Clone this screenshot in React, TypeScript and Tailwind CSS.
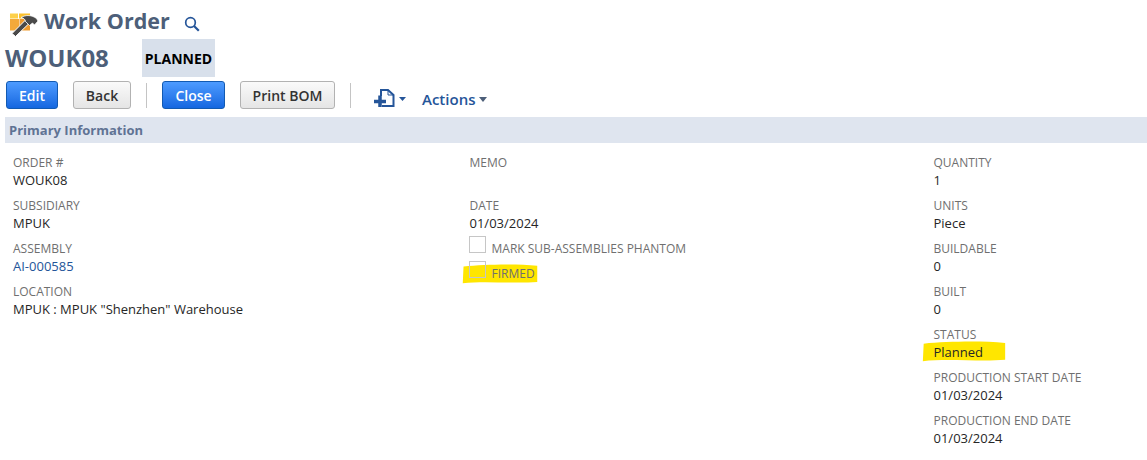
const blueBtn =
  "h-[28px] rounded-[3px] border border-[#125ab2] bg-gradient-to-b from-[#4d9bff] to-[#1467e0] text-[14px] font-semibold text-white flex items-center justify-center";
const grayBtn =
  "h-[28px] rounded-[3px] border border-[#b2b2b2] bg-gradient-to-b from-[#fafafa] to-[#e5e5e5] text-[14px] font-semibold text-[#333] flex items-center justify-center";

const col1 = [
  { label: "ORDER #", value: "WOUK08" },
  { label: "SUBSIDIARY", value: "MPUK" },
  { label: "ASSEMBLY", value: "AI-000585", link: true },
  { label: "LOCATION", value: 'MPUK : MPUK "Shenzhen" Warehouse' },
];

const col3 = [
  { label: "QUANTITY", value: "1" },
  { label: "UNITS", value: "Piece" },
  { label: "BUILDABLE", value: "0" },
  { label: "BUILT", value: "0" },
  { label: "STATUS", value: "Planned", mark: true },
  { label: "PRODUCTION START DATE", value: "01/03/2024" },
  { label: "PRODUCTION END DATE", value: "01/03/2024" },
];

function Marker({ className }: { className: string }) {
  return (
    <svg className={className} viewBox="0 0 100 30" preserveAspectRatio="none">
      <path d="M2 5 C30 2 70 1 99 4 L99 27 C70 30 30 25 1 29 Z" fill="#ffe600" />
    </svg>
  );
}

function Field({ label, value, link, mark }: { label: string; value: string; link?: boolean; mark?: boolean }) {
  return (
    <div className="h-[43px]">
      <div className="h-[18px] leading-[20px] text-[12px] text-[#6f6f6f]">{label}</div>
      <div className={`relative h-[18px] leading-[18px] text-[13px] ${link ? "text-[#255599]" : "text-[#262626]"}`}>
        {mark && <Marker className="absolute left-[-12px] top-[-3px] w-[84px] h-[22px]" />}
        <span className="relative">{value}</span>
      </div>
    </div>
  );
}

export default function App() {
  return (
    <div className="w-[1147px] h-[460px] overflow-hidden bg-white font-['Open_Sans',sans-serif]">
      {/* Title */}
      <div className="flex items-center h-[39px] pl-[9px] pt-[6px]">
        <svg width="31" height="28" viewBox="0 0 31 28">
          <path d="M1 4.500h8v5H1z" fill="#fdd04a" />
          <path d="M10 4.500h11v5H10z" fill="#fbc02d" />
          <path d="M1 10h9v11.500H1z" fill="#f4a93a" />
          <path d="M10.500 10H21v11.500H10.500z" fill="#ee9a2e" />
          <path d="M3 24.500l13-13 3.500 3.500-13 12.500z" fill="#4a4a4a" stroke="#fff" strokeWidth="1" />
          <path d="M12 8.500c5-3 11-2.500 15.500 1l1.500 2.500-3.500 4-2-2-3 2.500-4-4c0-2-2-3.500-4.500-4z" fill="#4a4a4a" stroke="#fff" strokeWidth="0.8" />
        </svg>
        <span className="ml-[4px] mb-[3px] text-[21.5px] font-bold leading-none text-[#4d5f79]">Work Order</span>
        <svg className="ml-[14px] mt-[2px]" width="16" height="16" viewBox="0 0 16 16" fill="none" stroke="#255599" strokeWidth="1.7">
          <circle cx="6.500" cy="6.500" r="4.800" />
          <path d="M10 10l4.800 4.800" strokeWidth="2.200" />
        </svg>
      </div>

      {/* Record name and status */}
      <div className="flex items-center h-[38px] pl-[5px]">
        <span className="w-[137px] text-[24px] font-bold leading-none text-[#4d5f79]">WOUK08</span>
        <span className="flex h-[38px] w-[73px] items-center justify-center bg-[#d8e0eb] text-[14px] font-bold text-black">
          PLANNED
        </span>
      </div>

      {/* Buttons */}
      <div className="flex items-center h-[28px] mt-[4px] pl-[6px]">
        <button className={`${blueBtn} w-[52px]`}>Edit</button>
        <button className={`${grayBtn} w-[58px] ml-[15px]`}>Back</button>
        <div className="w-px h-[25px] bg-[#c4c4c4] ml-[15px]" />
        <button className={`${blueBtn} w-[63px] ml-[15px]`}>Close</button>
        <button className={`${grayBtn} w-[95px] ml-[15px]`}>Print BOM</button>
        <div className="w-px h-[25px] bg-[#c4c4c4] ml-[15px]" />
        <svg className="ml-[23px] mt-[5px]" width="21" height="18" viewBox="0 0 21 18" fill="none" stroke="#255599" strokeWidth="2">
          <path d="M7 7V1h7l5.500 5v11H8" />
          <path d="M14 1v5h5.500" strokeWidth="1" />
          <path d="M6 6.500V18M0 12.500h12" strokeWidth="3.500" />
        </svg>
        <svg className="ml-[4px] mt-[7px]" width="7" height="4" viewBox="0 0 7 4">
          <path d="M0 0h7L3.500 4z" fill="#255599" />
        </svg>
        <span className="ml-[16px] mt-[8px] text-[15px] font-semibold text-[#255599]">Actions</span>
        <svg className="ml-[4px] mt-[9px]" width="8" height="5" viewBox="0 0 8 5">
          <path d="M0 0h8L4 5z" fill="#4d5f79" />
        </svg>
      </div>

      {/* Section bar */}
      <div className="ml-[5px] mt-[8px] h-[26px] bg-[#dfe5ef] pl-[4px] text-[13px] font-bold leading-[27px] text-[#5f7394]">
        Primary Information
      </div>

      {/* Fields */}
      <div className="grid grid-cols-[456.500px_464px_1fr] pl-[13px] pt-[10px]">
        <div>
          {col1.map((f) => (
            <Field key={f.label} {...f} />
          ))}
        </div>
        <div>
          <Field label="MEMO" value="" />
          <Field label="DATE" value="01/03/2024" />
          <div className="flex h-[25px] items-start mt-[-4px]">
            <div className="ml-[-1px] mt-[1px] h-[17px] w-[17px] border border-[#c6c6c6] bg-white" />
            <span className="ml-[6px] mt-[5px] text-[12px] leading-[18px] text-[#6f6f6f]">MARK SUB-ASSEMBLIES PHANTOM</span>
          </div>
          <div className="relative flex h-[25px] items-start">
            <Marker className="absolute left-[-8px] top-[3px] w-[76px] h-[21px]" />
            <div className="relative ml-[-1px] mt-[1px] h-[17px] w-[17px] border border-[#c6c6c6]" />
            <span className="relative ml-[6px] mt-[5px] text-[12px] leading-[18px] text-[#6f6f6f]">FIRMED</span>
          </div>
        </div>
        <div>
          {col3.map((f) => (
            <Field key={f.label} {...f} />
          ))}
        </div>
      </div>
    </div>
  );
}
